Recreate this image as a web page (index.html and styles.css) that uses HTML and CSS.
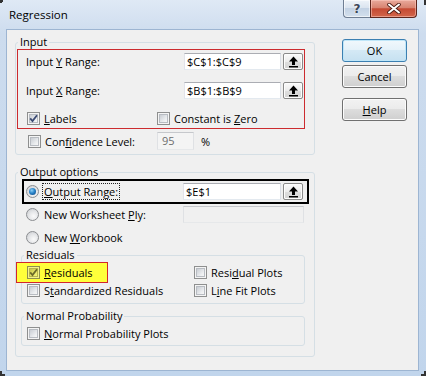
FILE: index.html
```html
<!DOCTYPE html>
<html>
<head>
<meta charset="utf-8">
<link rel="stylesheet" href="styles.css">
</head>
<body>
<div class="window">
  <span class="mark mark-tl"></span>
  <span class="mark mark-tr"></span>
  <span class="mark mark-bl"></span>
  <span class="mark mark-br"></span>
  <div class="titlebar">
    <div class="title">Regression</div>
    <div class="caption">
      <div class="cap-help">?</div>
      <div class="cap-close">
        <svg width="14" height="11" viewBox="0 0 14 11">
          <path d="M2 1.5 L12 9.5 M12 1.5 L2 9.5" stroke="#4a1a12" stroke-width="3.6" stroke-linecap="round"/>
          <path d="M2 1.5 L12 9.5 M12 1.5 L2 9.5" stroke="#ffffff" stroke-width="2" stroke-linecap="round"/>
        </svg>
      </div>
    </div>
  </div>
  <div class="panel">
    <div class="left">
      <fieldset class="group g-input">
        <legend>Input</legend>
        <div class="input-body">
          <div class="redbox">
            <div class="rrow">
              <span class="rlabel">Input <u>Y</u> Range:</span>
              <span class="textbox">$C$1:$C$9</span>
              <span class="refbtn"><svg width="11" height="12" viewBox="0 0 11 12"><path d="M5.5 0.5 L10 5.5 L7 5.5 L7 9 L4 9 L4 5.5 L1 5.5 Z" fill="#000"/><rect x="1" y="10" width="9" height="1.5" fill="#000"/></svg></span>
            </div>
            <div class="rrow">
              <span class="rlabel">Input <u>X</u> Range:</span>
              <span class="textbox">$B$1:$B$9</span>
              <span class="refbtn"><svg width="11" height="12" viewBox="0 0 11 12"><path d="M5.5 0.5 L10 5.5 L7 5.5 L7 9 L4 9 L4 5.5 L1 5.5 Z" fill="#000"/><rect x="1" y="10" width="9" height="1.5" fill="#000"/></svg></span>
            </div>
            <div class="chkrow">
              <span class="item w-labels"><span class="cb"><span class="cb-in"><svg width="9" height="9" viewBox="0 0 9 9"><path d="M1.2 4.4 L3.5 7 L8 1.2" fill="none" stroke="#3b4a73" stroke-width="1.8"/></svg></span></span><span class="txt"><u>L</u>abels</span></span>
              <span class="item"><span class="cb"><span class="cb-in"></span></span><span class="txt">Constant is <u>Z</u>ero</span></span>
            </div>
          </div>
          <div class="conf">
            <span class="item w-conf"><span class="cb"><span class="cb-in"></span></span><span class="txt">Con<u>f</u>idence Level:</span></span>
            <span class="textbox tb-dis tb-conf">95</span>
            <span class="pct">%</span>
          </div>
        </div>
      </fieldset>

      <fieldset class="group g-output">
        <legend>Output options</legend>
        <div class="output-body">
          <div class="blackbox">
            <span class="item w-radio"><span class="rb rb-on"></span><span class="txt focus"><u>O</u>utput Range:</span></span>
            <span class="textbox tb-out">$E$1</span>
            <span class="refbtn"><svg width="11" height="12" viewBox="0 0 11 12"><path d="M5.5 0.5 L10 5.5 L7 5.5 L7 9 L4 9 L4 5.5 L1 5.5 Z" fill="#000"/><rect x="1" y="10" width="9" height="1.5" fill="#000"/></svg></span>
          </div>
          <div class="orow">
            <span class="item w-radio"><span class="rb"></span><span class="txt">New Worksheet <u>P</u>ly:</span></span>
            <span class="textbox tb-dis tb-ply"></span>
          </div>
          <div class="orow orow-2">
            <span class="item"><span class="rb"></span><span class="txt">New <u>W</u>orkbook</span></span>
          </div>

          <fieldset class="group g-sub g-res">
            <legend>Residuals</legend>
            <div class="resgrid">
              <div class="yellow">
                <span class="item"><span class="cb cb-y"><span class="cb-in"><svg width="9" height="9" viewBox="0 0 9 9"><path d="M1.2 4.4 L3.5 7 L8 1.2" fill="none" stroke="#6b6a2a" stroke-width="1.8"/></svg></span></span><span class="txt"><u>R</u>esiduals</span></span>
              </div>
              <span class="item"><span class="cb"><span class="cb-in"></span></span><span class="txt">Resi<u>d</u>ual Plots</span></span>
              <span class="item pad5"><span class="cb"><span class="cb-in"></span></span><span class="txt">S<u>t</u>andardized Residuals</span></span>
              <span class="item"><span class="cb"><span class="cb-in"></span></span><span class="txt">L<u>i</u>ne Fit Plots</span></span>
            </div>
          </fieldset>

          <fieldset class="group g-sub g-np">
            <legend>Normal Probability</legend>
            <div class="npbody">
              <span class="item"><span class="cb"><span class="cb-in"></span></span><span class="txt"><u>N</u>ormal Probability Plots</span></span>
            </div>
          </fieldset>
        </div>
      </fieldset>
    </div>
    <div class="right">
      <div class="btn btn-default">OK</div>
      <div class="btn">Cancel</div>
      <div class="btn btn-help"><u>H</u>elp</div>
    </div>
  </div>
</div>
</body>
</html>
```

FILE: styles.css
```css
* { box-sizing: border-box; }
html, body { margin: 0; padding: 0; }
body {
  width: 426px;
  height: 376px;
  overflow: hidden;
  font-family: "Open Sans", "Noto Sans", sans-serif;
  font-size: 11px;
  color: #000;
}
.window {
  position: relative;
  width: 426px;
  height: 376px;
  background: linear-gradient(#dfe9f5 0px, #cddcee 34px, #c1d5ec 100%);
}

/* crop marks at the screenshot corners */
.mark { position: absolute; width: 5px; height: 5px; }
.mark-tl { left: 0; top: 0; border-top: 2px solid #333; border-left: 2px solid #333; width: 3px; height: 3px; }
.mark-tr { right: 0; top: 0; border-right: 2px solid #333; }
.mark-bl { left: 0; bottom: 0; border-left: 2px solid #333; border-bottom: 2px solid #333; }
.mark-br { right: 0; bottom: 0; border-right: 2px solid #333; border-bottom: 2px solid #333; }

.titlebar {
  height: 30px;
  display: flex;
  justify-content: space-between;
  padding: 0 9px 0 9px;
}
.title {
  margin-top: 7px;
  font-size: 11.5px;
  line-height: 16px;
  height: 16px;
}
.caption { display: flex; height: 18px; }
.cap-help {
  width: 27px;
  height: 18px;
  border: 1px solid #6f7e93;
  border-top: none;
  border-right: none;
  border-radius: 0 0 0 4px;
  background: linear-gradient(#eef3f9, #dbe4ef 45%, #c3d2e4 50%, #d3dfed);
  box-shadow: inset 0 0 0 1px rgba(255,255,255,0.6);
  display: flex;
  align-items: center;
  justify-content: center;
  font-family: "DejaVu Sans", sans-serif;
  font-weight: bold;
  font-size: 12px;
  line-height: 12px;
  color: #3a4558;
  text-shadow: 0 0 2px #fff;
}
.cap-close {
  width: 47px;
  height: 18px;
  border: 1px solid #5e261d;
  border-top: none;
  border-radius: 0 0 4px 0;
  background: linear-gradient(#e9aa9c, #d88471 45%, #c54a33 52%, #d2664b 100%);
  box-shadow: inset 0 0 0 1px rgba(255,210,200,0.5);
  display: flex;
  align-items: center;
  justify-content: center;
}
.panel {
  margin: 0 8px 0 7px;
  height: 340px;
  background: #f0f0f0;
  box-shadow: 0 0 0 1px #9db5d2;
  display: flex;
  padding: 5px 0 0 8px;
}
.left { width: 300px; }
.right { margin-left: 27px; width: 65px; padding-top: 4px; }

/* group boxes */
.group {
  margin: 0;
  padding: 0;
  border: 1px solid #d5dfe5;
  border-radius: 3px;
  min-width: 0;
}
.group > legend {
  padding: 0 2px;
  margin-left: 2px;
  line-height: 14px;
  height: 14px;
}
.g-input { width: 300px; }
.input-body { padding: 0 0 4px 0; }
.g-output { width: 300px; margin-top: 10px; }
.output-body { padding: 0 0 10px 0; }
.g-sub { width: 284px; margin-left: 5px; }
.g-res { margin-top: 2px; }
.g-np { margin-top: 5px; }

/* red annotation box */
.redbox {
  margin-left: 1px;
  width: 288px;
  border: 1px solid #cc2b2f;
  padding: 3px 0 3px 0;
}
.rrow { display: flex; align-items: center; height: 17px; }
.rrow + .rrow { margin-top: 12px; }
.rlabel { width: 166px; padding-left: 8px; white-space: nowrap; }
.chkrow {
  display: flex;
  align-items: center;
  height: 14px;
  margin-top: 12px;
  padding-left: 9px;
}
.w-labels { width: 130px; }

.item { display: flex; align-items: center; white-space: nowrap; }
.txt { white-space: nowrap; }

/* text boxes */
.textbox {
  width: 97px;
  height: 17px;
  border: 1px solid;
  border-color: #abadb3 #dbdfe6 #e3e9ef #e2e3ea;
  background: #fff;
  padding-left: 2px;
  line-height: 15px;
  margin-right: 2px;
}
.tb-dis {
  background: #f4f4f4;
  border-color: #c6c8cc #dfe1e4 #e6e8ea #dfe1e4;
  color: #6d6d6d;
}
.tb-conf { width: 37px; height: 18px; line-height: 16px; padding-left: 4px; margin-right: 0; }
.pct { margin-left: 7px; }
.tb-out { width: 98px; }
.tb-ply { width: 121px; background: #f0f0f0; }

/* ref button */
.refbtn {
  width: 20px;
  height: 17px;
  border: 1px solid #8a8a8a;
  border-radius: 2px;
  background: linear-gradient(#fbfbfb, #ececec 50%, #dedede 51%, #d4d4d4);
  box-shadow: inset 0 0 0 1px #fdfdfd;
  display: flex;
  align-items: center;
  justify-content: center;
}

/* checkboxes */
.cb {
  width: 13px;
  height: 13px;
  border: 1px solid #8e8f8f;
  background: #f4f4f4;
  padding: 1px;
  margin-right: 4px;
  flex: none;
  display: flex;
}
.cb-in {
  flex: 1;
  border: 1px solid #b8bcc2;
  background: linear-gradient(135deg, #c9cdd3, #eceef0 70%, #f6f6f6);
  display: flex;
  align-items: center;
  justify-content: center;
}
.cb-in svg { margin: -1px; }
.cb-y { background: #f4f38a; border-color: #8e8e4e; }
.cb-y .cb-in { background: linear-gradient(135deg, #c8c64a, #ecea70 70%, #f5f37a); border-color: #b6b44c; }

/* confidence row */
.conf {
  display: flex;
  align-items: center;
  height: 18px;
  margin-top: 3px;
  padding-left: 12px;
}
.w-conf { width: 129px; }

/* radios */
.rb {
  width: 13px;
  height: 13px;
  border-radius: 50%;
  border: 1px solid #8b8d90;
  background: radial-gradient(circle at 60% 65%, #fafafa 0%, #e6e7e9 45%, #c5c8cc 100%);
  margin-right: 5px;
  flex: none;
  display: flex;
  align-items: center;
  justify-content: center;
}
.rb-on::after {
  content: "";
  width: 7px;
  height: 7px;
  border-radius: 50%;
  background: radial-gradient(circle at 40% 35%, #8fd0f5 0%, #2a84c9 45%, #0d3f7a 100%);
}
.w-radio { width: 157px; }

/* output options */
.blackbox {
  margin-left: 6px;
  width: 287px;
  height: 25px;
  border: 2px solid #000;
  display: flex;
  align-items: center;
  padding: 0 4px 0 2px;
}
.focus { outline: 1px dotted #222; outline-offset: 0; padding: 0 1px; margin-left: -1px; line-height: 15px; }
.orow {
  display: flex;
  align-items: center;
  height: 17px;
  margin-top: 2px;
  padding-left: 10px;
}
.orow-2 { margin-top: 6px; }

/* residuals */
.resgrid {
  display: grid;
  grid-template-columns: 172px 1fr;
  grid-template-rows: 21px 15px;
  align-items: center;
  padding-bottom: 5px;
}
.yellow {
  margin-left: -6px;
  width: 92px;
  height: 21px;
  background: #ffff3a;
  border: 1px solid #d2262c;
  padding-left: 10px;
  display: flex;
  align-items: center;
}
.pad5 { padding-left: 5px; }
.npbody { padding: 3px 0 5px 5px; display: flex; align-items: center; }
.npbody .item { height: 14px; }

/* buttons */
.btn {
  height: 23px;
  border: 1px solid #707070;
  border-radius: 3px;
  background: linear-gradient(#f2f2f2 0%, #ebebeb 49%, #dddddd 50%, #cfcfcf 100%);
  box-shadow: inset 0 0 0 1px #fcfcfc;
  display: flex;
  align-items: center;
  justify-content: center;
  margin-bottom: 3px;
}
.btn-default {
  border-color: #3c7fb1;
  background: linear-gradient(#f1f8fc 0%, #e4f1f9 49%, #d4e9f5 50%, #c6e1f1 100%);
  box-shadow: inset 0 0 0 1px #bfe6f8;
}
.btn-help { margin-top: 10px; }
```
